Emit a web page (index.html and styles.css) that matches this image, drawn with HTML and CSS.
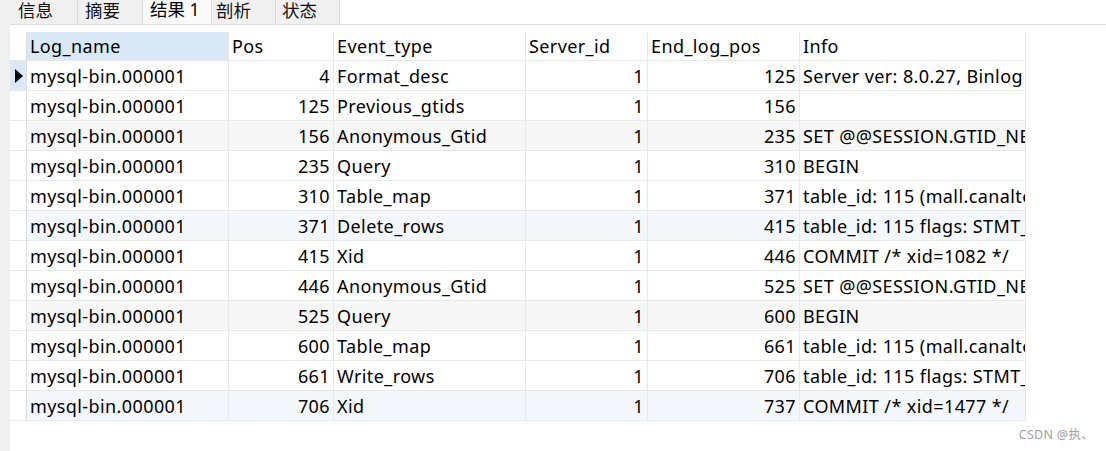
FILE: index.html
```html
<!DOCTYPE html>
<html lang="zh-CN">
<head>
  <meta charset="UTF-8">
  <title>结果 1</title>
  <link rel="stylesheet" href="styles.css">
</head>
<body>
  <div class="app">
    <div class="gutter"></div>
    <div class="main">
      <div class="tabs">
        <div class="tab t1">信息</div>
        <div class="tab t2">摘要</div>
        <div class="tab t3 active">结果 1</div>
        <div class="tab t4">剖析</div>
        <div class="tab t5">状态</div>
      </div>

      <div class="grid">
        <div class="row head">
          <div class="cell rh"></div>
          <div class="cell sel">Log_name</div>
          <div class="cell">Pos</div>
          <div class="cell">Event_type</div>
          <div class="cell">Server_id</div>
          <div class="cell">End_log_pos</div>
          <div class="cell">Info</div>
        </div>
        <div class="row">
          <div class="cell rh current"><span class="arrow"></span></div>
          <div class="cell">mysql-bin.000001</div>
          <div class="cell num">4</div>
          <div class="cell">Format_desc</div>
          <div class="cell num">1</div>
          <div class="cell num">125</div>
          <div class="cell">Server ver: 8.0.27, Binlog ver: 4</div>
        </div>
        <div class="row">
          <div class="cell rh"></div>
          <div class="cell">mysql-bin.000001</div>
          <div class="cell num">125</div>
          <div class="cell">Previous_gtids</div>
          <div class="cell num">1</div>
          <div class="cell num">156</div>
          <div class="cell"></div>
        </div>
        <div class="row grey">
          <div class="cell rh"></div>
          <div class="cell">mysql-bin.000001</div>
          <div class="cell num">156</div>
          <div class="cell">Anonymous_Gtid</div>
          <div class="cell num">1</div>
          <div class="cell num">235</div>
          <div class="cell">SET @@SESSION.GTID_NEXT= 'ANONYMOUS'</div>
        </div>
        <div class="row">
          <div class="cell rh"></div>
          <div class="cell">mysql-bin.000001</div>
          <div class="cell num">235</div>
          <div class="cell">Query</div>
          <div class="cell num">1</div>
          <div class="cell num">310</div>
          <div class="cell">BEGIN</div>
        </div>
        <div class="row">
          <div class="cell rh"></div>
          <div class="cell">mysql-bin.000001</div>
          <div class="cell num">310</div>
          <div class="cell">Table_map</div>
          <div class="cell num">1</div>
          <div class="cell num">371</div>
          <div class="cell">table_id: 115 (mall.canaltest)</div>
        </div>
        <div class="row blue">
          <div class="cell rh"></div>
          <div class="cell">mysql-bin.000001</div>
          <div class="cell num">371</div>
          <div class="cell">Delete_rows</div>
          <div class="cell num">1</div>
          <div class="cell num">415</div>
          <div class="cell">table_id: 115 flags: STMT_END_F</div>
        </div>
        <div class="row">
          <div class="cell rh"></div>
          <div class="cell">mysql-bin.000001</div>
          <div class="cell num">415</div>
          <div class="cell">Xid</div>
          <div class="cell num">1</div>
          <div class="cell num">446</div>
          <div class="cell">COMMIT /* xid=1082 */</div>
        </div>
        <div class="row">
          <div class="cell rh"></div>
          <div class="cell">mysql-bin.000001</div>
          <div class="cell num">446</div>
          <div class="cell">Anonymous_Gtid</div>
          <div class="cell num">1</div>
          <div class="cell num">525</div>
          <div class="cell">SET @@SESSION.GTID_NEXT= 'ANONYMOUS'</div>
        </div>
        <div class="row grey">
          <div class="cell rh"></div>
          <div class="cell">mysql-bin.000001</div>
          <div class="cell num">525</div>
          <div class="cell">Query</div>
          <div class="cell num">1</div>
          <div class="cell num">600</div>
          <div class="cell">BEGIN</div>
        </div>
        <div class="row">
          <div class="cell rh"></div>
          <div class="cell">mysql-bin.000001</div>
          <div class="cell num">600</div>
          <div class="cell">Table_map</div>
          <div class="cell num">1</div>
          <div class="cell num">661</div>
          <div class="cell">table_id: 115 (mall.canaltest)</div>
        </div>
        <div class="row">
          <div class="cell rh"></div>
          <div class="cell">mysql-bin.000001</div>
          <div class="cell num">661</div>
          <div class="cell">Write_rows</div>
          <div class="cell num">1</div>
          <div class="cell num">706</div>
          <div class="cell">table_id: 115 flags: STMT_END_F</div>
        </div>
        <div class="row blue">
          <div class="cell rh"></div>
          <div class="cell">mysql-bin.000001</div>
          <div class="cell num">706</div>
          <div class="cell">Xid</div>
          <div class="cell num">1</div>
          <div class="cell num">737</div>
          <div class="cell">COMMIT /* xid=1477 */</div>
        </div>
      </div>
    </div>
  </div>

  <div class="watermark">CSDN @执、</div>
</body>
</html>
```

FILE: styles.css
```css
html, body {
  margin: 0;
  height: 100%;
  background: #fff;
}
body {
  font-family: "Noto Sans", "Noto Sans CJK SC", sans-serif;
  color: #000;
  position: relative;
  overflow: hidden;
}

.app {
  display: flex;
  height: 100%;
}
.gutter {
  width: 10px;
  flex: none;
  background: #f0f0f0;
}
.main {
  flex: 1;
  display: flex;
  flex-direction: column;
}

/* tab strip */
.tabs {
  display: flex;
  height: 25px;
  box-sizing: border-box;
  border-bottom: 1px solid #dcdcdc;
}
.tab {
  box-sizing: border-box;
  width: 64px;
  padding-left: 7px;
  background: #f0f0f0;
  border-right: 1px solid #dcdcdc;
  font-size: 17.5px;
  line-height: 20px;
  color: #111;
  white-space: nowrap;
}
.tab.t1 { width: 68px; padding-left: 8px; }
.tab.t2 { width: 65px; }
.tab.t3 { width: 69px; }
.tab.t4 { padding-left: 4px; }
.tab.t5 { padding-left: 6px; }
.tab.active {
  background: #fafafa;
  line-height: 19px;
  color: #000;
}

/* result grid */
.grid {
  margin-top: 7px;
  font-size: 18px;
  letter-spacing: 0.4px;
}
.row {
  display: grid;
  grid-template-columns: 17px 202px 105px 192px 122px 152px 226px;
  height: 30px;
}
.row.head {
  height: 29px;
}
.row.grey .cell { background: #f7f7f7; }
.row.blue .cell { background: #f4f8fc; }
.cell {
  box-sizing: border-box;
  border-right: 1px solid #e8e8e8;
  border-bottom: 1px solid #e8e8e8;
  padding: 0 3px;
  display: flex;
  align-items: center;
  white-space: nowrap;
  overflow: hidden;
}
.cell.num {
  justify-content: flex-end;
  padding-right: 3px;
}
.cell.sel {
  background: #d9e9f8;
}
.row .cell.rh {
  background: #fff;
  border-right-color: #dcdcdc;
  padding: 0;
}
.row .cell.rh.current {
  background: #d9e9f8;
}
.arrow {
  width: 0;
  height: 0;
  margin-left: 5px;
  border-left: 8px solid #000;
  border-top: 7px solid transparent;
  border-bottom: 7px solid transparent;
}

.watermark {
  position: absolute;
  right: 12px;
  bottom: 8px;
  font-size: 12.5px;
  letter-spacing: 0.3px;
  color: #a3a3a3;
}
```
